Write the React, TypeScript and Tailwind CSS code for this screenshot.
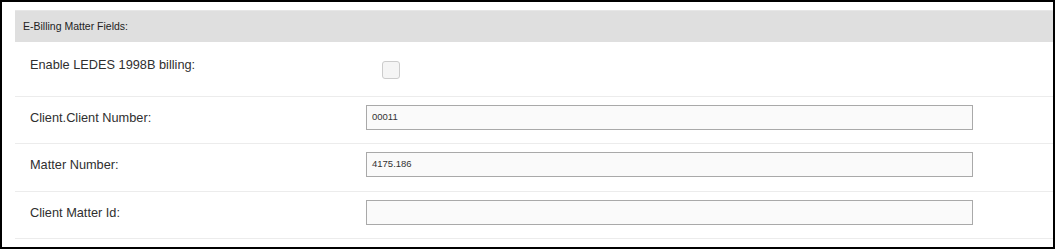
import React from "react";

const font = { fontFamily: '"Liberation Sans", Arial, Helvetica, sans-serif' };

function InputRow({ label, value, pb }: { label: string; value: string; pb: string }) {
  return (
    <div className={`flex items-start border-b border-[#ececec] pt-[8px] ${pb}`}>
      <div className="flex h-[25px] w-[351px] items-center pl-[15px] text-[12.75px] leading-[16px] text-[#2f2f2f]">
        {label}
      </div>
      <div className="flex h-[25px] w-[607px] items-center border border-[#a9a9a9] bg-[#fafafa] pl-[5px] text-[9.5px] text-[#333333]">
        {value}
      </div>
    </div>
  );
}

export default function App() {
  return (
    <div style={font} className="h-[249px] w-[1055px] border-2 border-black bg-white pl-[13px] pt-[8px]">
      <div className="flex h-[32px] items-center border-t border-[#e7e7e7] bg-[#dfdfdf] pl-[8px] text-[10.5px] text-[#222222]">
        E-Billing Matter Fields:
      </div>
      <div className="flex h-[55px] items-start border-b border-[#ececec]">
        <div className="w-[351px] pl-[15px] pt-[15px] text-[12.75px] leading-[16px] text-[#2f2f2f]">
          Enable LEDES 1998B billing:
        </div>
        <div className="pl-[16px] pt-[19px]">
          <div className="h-[18px] w-[18px] rounded-[3px] border border-[#cccccc] bg-[#f5f5f5]" />
        </div>
      </div>
      <InputRow label="Client.Client Number:" value="00011" pb="pb-[13px]" />
      <InputRow label="Matter Number:" value="4175.186" pb="pb-[14px]" />
      <InputRow label="Client Matter Id:" value="" pb="pb-[13px]" />
    </div>
  );
}
